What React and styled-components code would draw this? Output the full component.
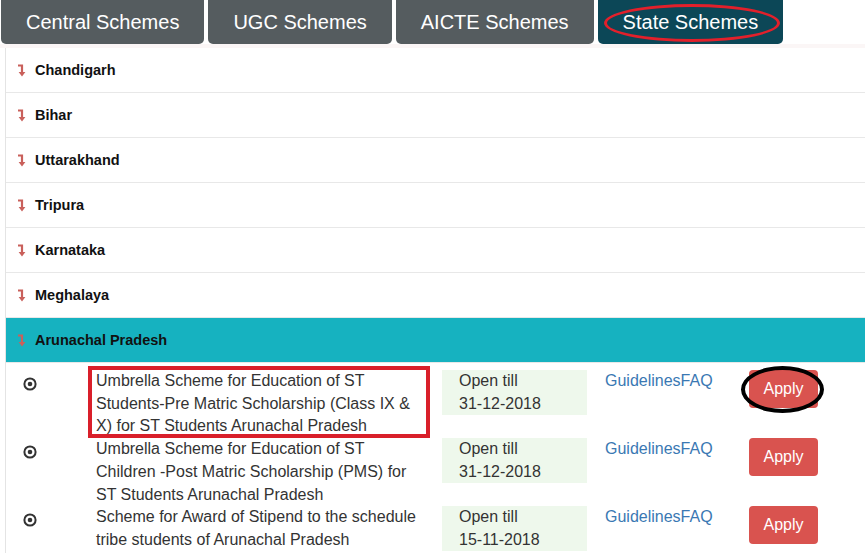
import React from "react";
import styled, { createGlobalStyle } from "styled-components";

const tabs = ["Central Schemes", "UGC Schemes", "AICTE Schemes", "State Schemes"];

const states = [
    "Chandigarh",
    "Bihar",
    "Uttarakhand",
    "Tripura",
    "Karnataka",
    "Meghalaya",
    "Arunachal Pradesh",
];

const schemes = [
    {
        title: "Umbrella Scheme for Education of ST Students-Pre Matric Scholarship (Class IX & X) for ST Students Arunachal Pradesh",
        date: "31-12-2018",
        marked: true,
    },
    {
        title: "Umbrella Scheme for Education of ST Children -Post Matric Scholarship (PMS) for ST Students Arunachal Pradesh",
        date: "31-12-2018",
    },
    {
        title: "Scheme for Award of Stipend to the schedule tribe students of Arunachal Pradesh",
        date: "15-11-2018",
    },
];

const TurnArrow = () => (
    <svg width="9" height="13" viewBox="0 0 9 13">
        <path d="M1 1.5 H5 V9" fill="none" stroke="#c9605b" strokeWidth="2.2" />
        <path d="M1.6 8 L5 12.5 L8.4 8 Z" fill="#c9605b" />
    </svg>
);

const RadioIcon = () => (
    <svg width="14" height="14" viewBox="0 0 14 14">
        <circle cx="7" cy="7" r="5.6" fill="none" stroke="#333" strokeWidth="2" />
        <circle cx="7" cy="7" r="2.3" fill="#333" />
    </svg>
);

const App = () => {
    return (
        <>
            <GlobalStyle />
            <TabBar>
                {tabs.map((t, i) => (
                    <Tab key={t} $active={i === 3}>
                        {t}
                        {i === 3 && <TabCircle />}
                    </Tab>
                ))}
            </TabBar>
            <Panel>
                {states.map((s, i) => (
                    <StateRow key={s} $open={i === states.length - 1}>
                        <TurnArrow />
                        {s}
                    </StateRow>
                ))}
                <SchemeList>
                    {schemes.map((sc) => (
                        <SchemeRow key={sc.title}>
                            <RadioCell>
                                <RadioIcon />
                            </RadioCell>
                            <TitleCell>
                                {sc.title}
                                {sc.marked && <MarkBox />}
                            </TitleCell>
                            <DateCell>
                                Open till
                                <br />
                                {sc.date}
                            </DateCell>
                            <LinkCell>
                                <Link>Guidelines</Link>
                                <Link>FAQ</Link>
                            </LinkCell>
                            <ButtonCell>
                                <ApplyButton>Apply</ApplyButton>
                                {sc.marked && <MarkOval />}
                            </ButtonCell>
                        </SchemeRow>
                    ))}
                </SchemeList>
            </Panel>
        </>
    );
};

const GlobalStyle = createGlobalStyle`
    body {
        margin: 0;
        background: #fff;
        font-family: "Liberation Sans", Arial, sans-serif;
        overflow: hidden;
    }
`;

const TabBar = styled.div`
    display: flex;
    gap: 4px;
    padding-left: 1px;
    height: 44px;
    border-bottom: 4px solid #fbf6f6;
`;

const Tab = styled.div`
    position: relative;
    display: flex;
    align-items: center;
    padding: 0 25px;
    height: 44px;
    font-size: 20px;
    color: #fff;
    background: ${(p) => (p.$active ? "#0c4757" : "#555c5f")};
    border-radius: 0 0 5px 5px;
`;

const TabCircle = styled.span`
    position: absolute;
    left: 6px;
    top: 4px;
    width: 176px;
    height: 38px;
    box-sizing: border-box;
    border: 3px solid #e2202b;
    border-radius: 50%;
`;

const Panel = styled.div`
    margin-left: 5px;
    border-left: 1px solid #e4e4e4;
    min-height: 520px;
`;

const StateRow = styled.div`
    display: flex;
    align-items: center;
    gap: 9px;
    height: 44px;
    padding-left: 11px;
    border-bottom: 1px solid #e8e8e8;
    font-size: 14.5px;
    font-weight: bold;
    color: #111;
    background: ${(p) => (p.$open ? "#16b2c0" : "#fff")};
`;

const SchemeList = styled.div`
    padding-top: 7px;
`;

const SchemeRow = styled.div`
    display: grid;
    grid-template-columns: 90px 346px 163px 144px 69px;
    align-items: start;
    font-size: 16px;
    line-height: 22.7px;
    color: #333;
`;

const RadioCell = styled.div`
    padding: 5px 0 0 17px;
    height: 14px;
`;

const TitleCell = styled.div`
    position: relative;
    padding-right: 18px;
`;

const MarkBox = styled.span`
    position: absolute;
    left: -8px;
    top: -4px;
    width: 342px;
    height: 72px;
    box-sizing: border-box;
    border: 4px solid #d91f2a;
`;

const DateCell = styled.div`
    width: 145px;
    height: 45px;
    box-sizing: border-box;
    padding-left: 17px;
    background: #eef8ec;
`;

const LinkCell = styled.div`
    display: flex;
`;

const Link = styled.a`
    color: #3a78b3;
    text-decoration: none;
`;

const ButtonCell = styled.div`
    position: relative;
`;

const ApplyButton = styled.button`
    width: 69px;
    height: 38px;
    border: none;
    border-radius: 4px;
    background: #d9534f;
    color: #fff;
    font-family: inherit;
    font-size: 16px;
    padding: 0;
`;

const MarkOval = styled.span`
    position: absolute;
    left: -8px;
    top: -4px;
    width: 83px;
    height: 47px;
    box-sizing: border-box;
    border: 4px solid #000;
    border-radius: 50%;
`;

export default App;
